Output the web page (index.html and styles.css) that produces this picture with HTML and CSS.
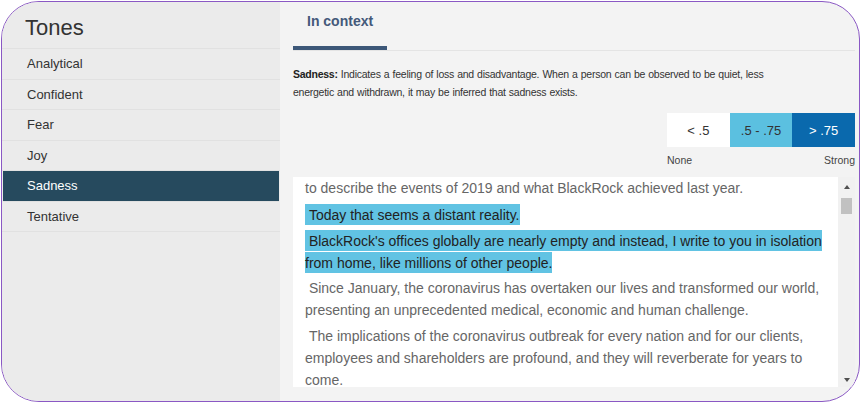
FILE: index.html
```html
<!DOCTYPE html>
<html>
<head>
<meta charset="utf-8">
<link rel="stylesheet" href="styles.css">
</head>
<body>
<div class="frame">
  <aside class="sidebar">
    <h1 class="title">Tones</h1>
    <ul class="tones">
      <li>Analytical</li>
      <li>Confident</li>
      <li>Fear</li>
      <li>Joy</li>
      <li class="active">Sadness</li>
      <li>Tentative</li>
    </ul>
  </aside>
  <main class="panel">
    <div class="tabs">
      <div class="tab">In context</div>
    </div>
    <p class="desc"><b>Sadness:</b> Indicates a feeling of loss and disadvantage. When a person can be observed to be quiet, less energetic and withdrawn, it may be inferred that sadness exists.</p>
    <div class="legend">
      <div class="scale">
        <div class="seg low">&lt; .5</div>
        <div class="seg mid">.5 - .75</div>
        <div class="seg high">&gt; .75</div>
      </div>
      <div class="scale-labels"><span>None</span><span>Strong</span></div>
    </div>
    <div class="viewer">
      <div class="text">
        <p>to describe the events of 2019 and what BlackRock achieved last year.</p>
        <p><span class="hl">&nbsp;Today that seems a distant reality.</span></p>
        <p><span class="hl">&nbsp;BlackRock's offices globally are nearly empty and instead, I write to you in isolation from home, like millions of other people.</span></p>
        <p>&nbsp;Since January, the coronavirus has overtaken our lives and transformed our world, presenting an unprecedented medical, economic and human challenge.</p>
        <p>&nbsp;The implications of the coronavirus outbreak for every nation and for our clients, employees and shareholders are profound, and they will reverberate for years to come.</p>
      </div>
      <div class="scrollbar">
        <div class="arrow up"></div>
        <div class="track"><div class="thumb"></div></div>
        <div class="arrow down"></div>
      </div>
    </div>
  </main>
</div>
</body>
</html>
```

FILE: styles.css
```css
* { box-sizing: border-box; }
html, body { margin: 0; padding: 0; background: #fff; }
body { font-family: Arial, "Liberation Sans", sans-serif; }

.frame {
  margin: 1px;
  width: 859px;
  height: 401px;
  border: 1.5px solid #8a58c4;
  border-radius: 38px;
  overflow: hidden;
  display: flex;
  background: #f3f3f3;
}

.sidebar {
  width: 278px;
  flex: none;
  background: #ebebeb;
}
.title {
  margin: 0;
  height: 47px;
  padding: 13px 0 0 23px;
  font-size: 22px;
  font-weight: normal;
  color: #333;
  border-bottom: 1px solid #e1e1e1;
}
.tones { list-style: none; margin: 0; padding: 0; }
.tones li {
  height: 30.5px;
  line-height: 30px;
  padding-left: 25px;
  font-size: 13px;
  color: #333;
  border-bottom: 1px solid #e1e1e1;
}
.tones li.active {
  background: #264a5e;
  color: #fff;
  margin: 0 1px;
  padding-left: 24px;
}

.panel {
  flex: 1;
  padding: 0 4px 0 13px;
  display: flex;
  flex-direction: column;
}
.tabs {
  border-bottom: 1px solid #e4e4e4;
  height: 49px;
  display: flex;
}
.tab {
  width: 94px;
  padding: 11px 0 0 14px;
  font-size: 14px;
  font-weight: bold;
  color: #44597a;
  border-bottom: 4px solid #3c5778;
  height: 48px;
}
.desc {
  margin: 14px 0 0 0;
  max-width: 490px;
  font-size: 10.5px;
  letter-spacing: -0.25px;
  word-spacing: 0.5px;
  line-height: 18px;
  color: #333;
}
.desc b { color: #222; }

.legend {
  align-self: flex-end;
  width: 188px;
  margin-top: 12px;
}
.scale { display: flex; height: 34px; }
.seg {
  flex: 1;
  display: flex;
  align-items: center;
  justify-content: center;
  font-size: 13px;
}
.seg.low { background: #fff; color: #333; }
.seg.mid { background: #5bc0e0; color: #333; }
.seg.high { background: #0a69ad; color: #fff; }
.scale-labels {
  display: flex;
  justify-content: space-between;
  font-size: 10.5px;
  color: #444;
  margin-top: 7px;
}

.viewer {
  margin-top: 11px;
  height: 210px;
  background: #fff;
  display: flex;
}
.text {
  flex: 1;
  overflow: hidden;
  padding: 0 10px 0 12px;
  font-size: 14px;
  line-height: 22px;
  color: #666;
}
.text p { margin: 0 0 4px 0; }
.hl { background: #61c3e3; color: #222; padding: 2.5px 0; }

.scrollbar {
  width: 17px;
  flex: none;
  background: #f1f1f1;
  display: flex;
  flex-direction: column;
  align-items: center;
}
.arrow {
  width: 0; height: 0;
  border-left: 3.5px solid transparent;
  border-right: 3.5px solid transparent;
}
.arrow.up { border-bottom: 4px solid #505050; margin: 8px 0 6px; }
.arrow.down { border-top: 4px solid #505050; margin: 6px 0 5px; }
.track { flex: 1; width: 100%; padding: 3px 2px 1px; }
.thumb { width: 11px; height: 16px; background: #c1c1c1; margin: 0 auto; }
```
